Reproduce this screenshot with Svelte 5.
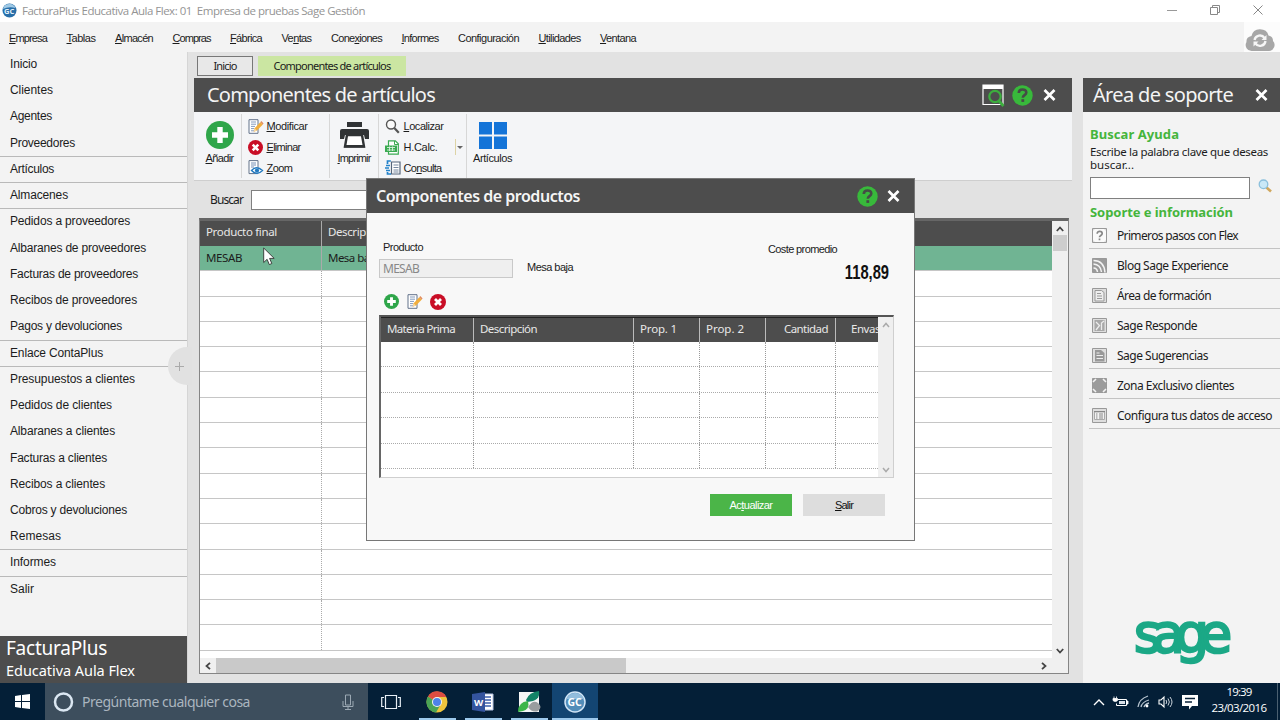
<script>
  const menu = [
    ['', 'E', 'mpresa', 38], ['', 'T', 'ablas', 29], ['', 'A', 'lmacén', 38], ['', 'C', 'ompras', 38],
    ['', 'F', 'ábrica', 32], ['Ve', 'n', 'tas', 30], ['Cone', 'x', 'iones', 51], ['', 'I', 'nformes', 37],
    ['Confi', 'g', 'uración', 61], ['', 'U', 'tilidades', 42], ['', 'V', 'entana', 36]
  ];
  const nav = [
    ['Inicio', 27], ['Clientes', 43], ['Agentes', 42], ['Proveedores', 65, true], ['Artículos', 44, true],
    ['Almacenes', 58, true], ['Pedidos a proveedores', 120], ['Albaranes de proveedores', 136],
    ['Facturas de proveedores', 128], ['Recibos de proveedores', 127], ['Pagos y devoluciones', 112, true],
    ['Enlace ContaPlus', 93, true], ['Presupuestos a clientes', 125], ['Pedidos de clientes', 102],
    ['Albaranes a clientes', 105], ['Facturas a clientes', 97], ['Recibos a clientes', 95],
    ['Cobros y devoluciones', 117], ['Remesas', 51, true], ['Informes', 46, true], ['Salir', 24]
  ];
  const support = [
    ['help', 'Primeros pasos con Flex', 121], ['feed', 'Blog Sage Experience', 111], ['doc', 'Área de formación', 94],
    ['reply', 'Sage Responde', 80], ['doc2', 'Sage Sugerencias', 91], ['zone', 'Zona Exclusivo clientes', 117],
    ['conf', 'Configura tus datos de acceso', 155]
  ];
  const rows = Array.from({ length: 15 });
  const modalRows = Array.from({ length: 5 });

  // Tracks a label so that it fills its given width.
  function fit(node, width) {
    node.style.letterSpacing = '0px';
    const natural = node.getBoundingClientRect().width;
    const count = node.textContent.length;
    node.style.letterSpacing = (width - natural) / count + 'px';
  }
</script>

{#snippet addIcon(s)}
  <svg width={s} height={s} viewBox="0 0 28 28"><circle cx="14" cy="14" r="14" fill="#2fa64a" /><path d="M14 6v16M6 14h16" stroke="#fff" stroke-width="5.4" /></svg>
{/snippet}
{#snippet editIcon(s)}
  <svg width={s} height={s} viewBox="0 0 15 15"><path d="M1 .7h9v13.6H1z" fill="#fff" stroke="#63728a" /><path d="M3 3h5M3 5.2h5M3 7.4h4M3 9.6h3M3 11.8h3" stroke="#7790b5" stroke-width=".9" /><path d="M5.7 12.8l.9-3.5 5.7-6.1 2.5 2.4-5.8 6z" fill="#f1ae3d" /><path d="M5.7 12.8l.9-3.5 2.3 2.3z" fill="#f5d7a0" /><path d="M12.3 3.2l1.1-1.1 2.2 2.3-1 1.1z" fill="#e28d61" /></svg>
{/snippet}
{#snippet deleteIcon(s)}
  <svg width={s} height={s} viewBox="0 0 16 16"><circle cx="8" cy="8" r="8" fill="#c90e26" /><path d="M5 5l6 6M11 5l-6 6" stroke="#fff" stroke-width="2.8" /></svg>
{/snippet}
{#snippet helpIcon()}
  <svg width="21" height="21" viewBox="0 0 21 21"><circle cx="10.5" cy="10.5" r="10.2" fill="#38b93b" /><path d="M6.8 8c0-4.8 7.5-4.5 7.5-.6 0 2.7-3.5 2.7-3.5 5.3" fill="none" stroke="#454c46" stroke-width="2.6" /><path d="M9.4 14.2h2.8v2.7H9.4z" fill="#454c46" /></svg>
{/snippet}
{#snippet closeIcon()}
  <svg width="13" height="12" viewBox="0 0 13 12"><path d="M1.5 1l10 10M11.500 1l-10 10" stroke="#fff" stroke-width="2.7" /></svg>
{/snippet}

<div class="window">
  <header class="titlebar">
    <svg class="app-icon" width="15" height="15" viewBox="0 0 15 15"><circle cx="7.500" cy="7.500" r="7" fill="#286ea8" /><path d="M1 6Q2 .8 8 1q4 .3 5.500 4Q7 3 1 6z" fill="#9fc9e5" /><text x="2" y="10.600" font-size="7.500" font-weight="bold" fill="#e2f1fc">GC</text></svg>
    <span class="title" use:fit={343}>FacturaPlus Educativa Aula Flex: 01&nbsp; Empresa de pruebas Sage Gestión</span>
    <div class="controls">
      <svg width="10" height="12" viewBox="0 0 10 12"><path d="M0 6.500h10" stroke="#999" /></svg>
      <svg width="10" height="10" viewBox="0 0 10 10"><path d="M.5 2.500h7v7h-7zM2.500 2.500v-2h7v7h-2" fill="none" stroke="#888" /></svg>
      <svg width="10" height="10" viewBox="0 0 10 10"><path d="M.5.5l9 9M9.500.5l-9 9" stroke="#888" /></svg>
    </div>
  </header>

  <nav class="menubar">
    {#each menu as [a, k, b, w]}
      <span class="menu-item" style:width="{w}px"><span use:fit={w}>{a}<u>{k}</u>{b}</span></span>
    {/each}
    <div class="cloud">
      <svg width="30" height="24" viewBox="0 0 30 24"><path d="M7 23a6 6 0 0 1-5.500-9Q1 9 6.500 8 8 1 15 1.200q7 0 8.500 6.400 4.500.7 4.500 5.400a6 6 0 0 1-4 10z" fill="#a7a7a7" /><path d="M9.500 12a5.500 5.500 0 0 1 10-2M20.500 13a5.500 5.500 0 0 1-10 2.500" fill="none" stroke="#f6f6f6" stroke-width="2.300" /><path d="M21.500 7v5h-5zM8.500 18.500v-5h5z" fill="#f6f6f6" /></svg>
    </div>
  </nav>

  <div class="body">
    <aside class="sidebar">
      <ul>
        {#each nav as [label, w, line]}
          <li class:line><span use:fit={w}>{label}</span></li>
        {/each}
      </ul>
      <div class="brand">
        <div class="brand-name"><span use:fit={101}>FacturaPlus</span></div>
        <div class="brand-sub"><span use:fit={129}>Educativa Aula Flex</span></div>
      </div>
      <div class="handle"><svg width="9" height="9" viewBox="0 0 9 9"><path d="M4.500 0v9M0 4.500h9" stroke="#aaa" /></svg></div>
    </aside>

    <main class="main">
      <div class="tabs">
        <div class="tab"><span use:fit={23}>Inicio</span></div>
        <div class="tab active"><span use:fit={117}>Componentes de artículos</span></div>
      </div>
      <div class="panel-head">
        <h1><span use:fit={228}>Componentes de artículos</span></h1>
        <svg class="find" width="22" height="22" viewBox="0 0 22 22"><path d="M1 1h20v19.500H1z" fill="none" stroke="#fff" stroke-width="1.200" /><path d="M1 1h20v4H1z" fill="#fff" /><circle cx="13" cy="12.500" r="5.700" fill="none" stroke="#3cae3e" stroke-width="2.200" /><path d="M16.500 16.500l5 5.500" stroke="#3cae3e" stroke-width="2.800" /></svg>
        {@render helpIcon()}
        <span class="x">{@render closeIcon()}</span>
      </div>
      <div class="toolbar">
        <div class="group big g1">{@render addIcon(28)}<span use:fit={28}><u>A</u>ñadir</span></div>
        <div class="group list g2">
          <div class="tool"><i>{@render editIcon(15)}</i><span use:fit={41}><u>M</u>odificar</span></div>
          <div class="tool"><i>{@render deleteIcon(15)}</i><span use:fit={34}><u>E</u>liminar</span></div>
          <div class="tool"><i><svg width="15" height="15" viewBox="0 0 15 15"><path d="M1 .6h9v13H1z" fill="#fff" stroke="#63728a" /><path d="M3 3h5M3 5h5M3 7h3" stroke="#7790b5" /><path d="M3.500 10.500q5-5.500 11 0-5.500 5.500-11 0z" fill="#fff" stroke="#237ac0" stroke-width="1.400" /><circle cx="9" cy="10.500" r="2.100" fill="#237ac0" /></svg></i><span use:fit={26}><u>Z</u>oom</span></div>
        </div>
        <div class="group big g3"><svg width="29" height="28" viewBox="0 0 29 28"><path d="M7 1h15v5H7zM0 10q0-2 2-2h25q2 0 2 2v8h-4l-1-4H5l-1 4H0z" fill="#303335" /><path d="M7 14h15l2 11.500H5z" fill="#fff" stroke="#303335" stroke-width="2.400" /><path d="M4 24h21v2.500H4z" fill="#303335" /></svg><span use:fit={33}><u>I</u>mprimir</span></div>
        <div class="group list g4">
          <div class="tool"><i><svg width="15" height="15" viewBox="0 0 15 15"><circle cx="6" cy="5.500" r="4.500" fill="#fafafa" stroke="#555" stroke-width="1.400" /><path d="M9.300 9l4.500 4.700" stroke="#555" stroke-width="2.200" /></svg></i><span use:fit={40}><u>L</u>ocalizar</span></div>
          <div class="tool"><i><svg width="15" height="15" viewBox="0 0 15 15"><path d="M3.500 5V.8h6.800l3 3v10.400H3.500z" fill="#fff" stroke="#3aaa51" stroke-width="1.200" /><path d="M9.500 1v3.500h4" fill="none" stroke="#3aaa51" /><path d="M0 5.500h12v6.500H0z" fill="#3aaa51" /><path d="M2 7.500h8M2 10h8M4.500 6.500v4.500M7.500 6.500v4.500" stroke="#d7f0db" stroke-width=".9" /></svg></i><span use:fit={34}>H.Calc.</span></div>
          <div class="tool"><i><svg width="16" height="15" viewBox="0 0 16 15"><path d="M6.500 2h8.500v12H6.500z" fill="#fff" stroke="#55657a" stroke-width="1.200" /><path d="M8.500 5h5M8.500 7.500h5M8.500 10h5M8.500 12h5" stroke="#667b94" stroke-width=".9" /><path d="M5.800 1H2.500v3M1 5.500h4M0 8h4M1 10.500h4M2.500 12v2H6" fill="none" stroke="#2382ca" stroke-width="1.700" /></svg></i><span use:fit={38}>Co<u>n</u>sulta</span></div>
          <div class="drop"></div>
        </div>
        <div class="group big g5"><svg width="28" height="27" viewBox="0 0 28 27"><path d="M0 0h13v12.500H0zM15 0h13v12.500H15zM0 14.500h13V27H0zM15 14.500h13V27H15z" fill="#1474d8" /></svg><span use:fit={39}>Artículos</span></div>
      </div>
      <div class="search"><span use:fit={33}>Buscar</span><div class="input"></div></div>
      <div class="grid">
        <div class="grid-top">
          <div class="rows">
            <div class="row head"><div><span use:fit={71}>Producto final</span></div><div><span use:fit={59}>Descripción</span></div></div>
            <div class="row sel"><div><span use:fit={36}>MESAB</span></div><div><span use:fit={50}>Mesa baja</span></div></div>
            {#each rows as _}<div class="row"><div></div><div></div></div>{/each}
          </div>
          <div class="vscroll">
            <svg width="8" height="6" viewBox="0 0 8 6"><path d="M.8 5L4 1.500 7.200 5" fill="none" stroke="#444" stroke-width="1.800" /></svg>
            <div class="vthumb"></div>
            <svg width="8" height="6" viewBox="0 0 8 6"><path d="M.8 1L4 4.500 7.200 1" fill="none" stroke="#444" stroke-width="1.800" /></svg>
          </div>
        </div>
        <div class="hscroll">
          <svg width="6" height="8" viewBox="0 0 6 8"><path d="M5 .8L1.500 4 5 7.200" fill="none" stroke="#444" stroke-width="1.800" /></svg>
          <div class="track"><div class="hthumb"></div></div>
          <svg width="6" height="8" viewBox="0 0 6 8"><path d="M1 .8L4.500 4 1 7.200" fill="none" stroke="#444" stroke-width="1.800" /></svg>
        </div>
      </div>
    </main>

    <aside class="support">
      <div class="panel-head side"><h1><span use:fit={140}>Área de soporte</span></h1>{@render closeIcon()}</div>
      <div class="support-body">
        <h2><span use:fit={89}>Buscar Ayuda</span></h2>
        <p><span use:fit={178}>Escribe la palabra clave que deseas</span><br /><span use:fit={44}>buscar...</span></p>
        <div class="help-search"><div class="input"></div><svg width="14" height="14" viewBox="0 0 14 14"><path d="M8.500 8.500l4.500 4" stroke="#d0a75d" stroke-width="2.600" /><circle cx="5.500" cy="5.300" r="4.300" fill="#c9e8f7" stroke="#8abfdc" stroke-width="1.300" /></svg></div>
        <h2><span use:fit={143}>Soporte e información</span></h2>
        {#each support as [icon, label, w]}
          <div class="link">
            <svg width="15" height="15" viewBox="0 0 15 15">
              <path d="M.5.5h14v14H.5z" fill={icon === 'feed' || icon === 'zone' ? '#9b9b9b' : '#dedede'} stroke="#999" />
              {#if icon === 'help'}<path d="M3 1h9l2 2v9l-2 2H3l-2-2V3z" fill="#fafafa" /><path d="M5.200 5.800c0-3.600 5-3 5-.3 0 2-2.700 2-2.700 3.800M7.500 10.600v1.700" fill="none" stroke="#888" stroke-width="1.700" />
              {:else if icon === 'feed'}<path d="M1.500 2.500q10.500 0 11.500 12M1.500 6q7 .5 8 8M1.500 10q3.500 0 4 4" fill="none" stroke="#f4f4f4" stroke-width="1.500" />
              {:else if icon === 'doc'}<path d="M3 2.500h6.500l2.500 2V13H3z" fill="#eee" stroke="#999" /><path d="M5 5.500h4M5 8h5M5 10.500h5" stroke="#999" />
              {:else if icon === 'reply'}<path d="M2.500 2h10v11h-10z" fill="#a8a8a8" /><path d="M4 4l3.500 3.500L4 12M9.500 12V5l2.500-2" fill="none" stroke="#ececec" stroke-width="1.300" />
              {:else if icon === 'doc2'}<path d="M3 2h6l3.500 3v8.500H3z" fill="#999" /><path d="M4.500 5h3M4.500 7.500H11M4.500 10.500H11" stroke="#eee" />
              {:else if icon === 'zone'}<path d="M1 4l3-3M11 1l3 3M1 11l3 3M14 11l-3 3" stroke="#f2f2f2" stroke-width="1.600" />
              {:else}<path d="M2.500 4v7.500h10V4z" fill="#f2f2f2" stroke="#aaa" /><path d="M2 3.500h11M4 6h1.500M7 6h4M4 8h1.500M7 8h4M4 10h1.500M7 10h4" stroke="#888" />{/if}
            </svg>
            <span use:fit={w}>{label}</span>
          </div>
        {/each}
        <svg class="sage" width="100" height="50" viewBox="0 0 100 50"><text x="0" y="37" textLength="98" lengthAdjust="spacing">sage</text></svg>
      </div>
    </aside>
  </div>

  <footer class="taskbar">
    <div class="start"><svg width="15" height="15" viewBox="0 0 15 15"><path d="M0 2l6-1v6H0zM7 .9L15 0v7H7zM0 8h6v6l-6-1zM7 8h8v7l-8-1z" fill="#fff" /></svg></div>
    <div class="cortana">
      <svg width="20" height="20" viewBox="0 0 20 20"><circle cx="10.500" cy="10" r="8.500" fill="none" stroke="#dbe7f2" stroke-width="2.500" /></svg>
      <span use:fit={168}>Pregúntame cualquier cosa</span>
      <svg class="mic" width="12" height="16" viewBox="0 0 12 16"><path d="M3.500 1h5v10h-5zM1 7v5.500h10V7M6 12.500V16M3 15.500h6" fill="none" stroke="#9ba8b3" /></svg>
    </div>
    <div class="task"><svg width="20" height="14" viewBox="0 0 20 14"><path d="M4.500.5h11v13h-11zM3 2.500H.7v9H3M17 2.500h2.300v9H17" fill="none" stroke="#e7eef5" stroke-width="1.200" /></svg></div>
    <div class="task open"><svg width="22" height="22" viewBox="0 0 22 22"><circle cx="11" cy="11" r="10.500" fill="#efc43d" /><path d="M11 11L2 5.500A10.500 10.500 0 0 0 10 21.500l4-7z" fill="#4aa455" /><path d="M2 5.500A10.500 10.500 0 0 1 20.400 6H11v5z" fill="#dc4c42" /><circle cx="11" cy="11" r="5" fill="#f3f3f3" /><circle cx="11" cy="11" r="4" fill="#4e82e8" /></svg></div>
    <div class="task open"><svg width="22" height="20" viewBox="0 0 22 20"><path d="M11 2h10v16H11z" fill="#fff" stroke="#b5c4e6" /><path d="M13 5h6M13 8h6M13 11h6M13 14h6" stroke="#3d5fac" stroke-width="1.300" /><path d="M0 2l13-2v20L0 18z" fill="#34549e" /><text x="2" y="13.500" font-size="9.500" font-weight="bold" fill="#fff">W</text></svg></div>
    <div class="task open"><svg width="23" height="22" viewBox="0 0 23 22"><path d="M1 1h20v20H1z" fill="#f6f6f6" /><path d="M8 9Q11 1 21 0q2 10-12 11z" fill="#138367" /><path d="M0 21Q0 11 10 10q2 8-5 10z" fill="#3db54a" /><path d="M10 16q5-8 10-4 5 4 0 8-6 2-10-4z" fill="#9a9d9f" /></svg></div>
    <div class="task open current"><svg width="22" height="22" viewBox="0 0 22 22"><circle cx="11" cy="11" r="10" fill="#528db9" stroke="#d2e6f7" stroke-width="1.500" /><path d="M2 8Q6 1 12 2q6 1 8 6z" fill="#92bddd" /><text x="3.500" y="15" font-size="10.500" font-weight="bold" fill="#fff">GC</text></svg></div>
    <div class="tray">
      <svg width="12" height="8" viewBox="0 0 12 8"><path d="M1 7l5-5 5 5" fill="none" stroke="#fff" stroke-width="1.400" /></svg>
      <svg width="15" height="12" viewBox="0 0 15 12"><path d="M5 3.500h8.500v6h-10v-2" fill="none" stroke="#fff" /><path d="M6 5h6v3H6z" fill="#d9e0e8" /><path d="M14 5h1v3h-1zM1 .5v2M3.500 .5v2M0 2.500h4.500v2q-1 1-2.200 1T0 4.500z" fill="#fff" stroke="#fff" stroke-width=".8" /></svg>
      <svg width="14" height="13" viewBox="0 0 14 13"><path d="M2 12Q3 4 12 1M5 12q1-5 8-7M8 12q1-3 5-4" fill="none" stroke="#b8c5d0" stroke-width="1.300" /><circle cx="11" cy="11" r="1.400" fill="#fff" /></svg>
      <svg width="16" height="12" viewBox="0 0 16 12"><path d="M1 4h2l3-3v10L3 8H1z" fill="none" stroke="#fff" stroke-width="1.100" /><path d="M8 4q1.500 2 0 4M10 2.500q2.700 3.500 0 7M12 1q4 5 0 10" fill="none" stroke="#ccd5dd" /></svg>
      <svg width="16" height="16" viewBox="0 0 16 16"><path d="M0 1h16v11h-6l-3 3.500V12H0z" fill="#fff" /><path d="M3 4.500h10M3 8h7" stroke="#082138" stroke-width="1.400" /></svg>
    </div>
    <div class="clock"><span use:fit={25}>19:39</span><span use:fit={55}>23/03/2016</span></div>
  </footer>

  <section class="modal">
    <div class="modal-head"><h3><span use:fit={204}>Componentes de productos</span></h3>{@render helpIcon()}<span class="mx">{@render closeIcon()}</span></div>
    <div class="modal-body">
      <div class="fields">
        <div class="product"><span use:fit={40}>Producto</span><div class="disabled"><span use:fit={36}>MESAB</span></div></div>
        <div class="desc"><span use:fit={46}>Mesa baja</span></div>
        <div class="cost"><span class="cost-label"><span use:fit={69}>Coste promedio</span></span><strong>118,89</strong></div>
      </div>
      <div class="mini">{@render addIcon(15)}{@render editIcon(15)}{@render deleteIcon(16)}</div>
      <div class="mtable">
        <div class="mrows">
          <div class="mrow mhead">
            <div><span use:fit={68}>Materia Prima</span></div><div><span use:fit={57}>Descripción</span></div><div><span use:fit={37}>Prop. 1</span></div><div><span use:fit={38}>Prop. 2</span></div><div class="num"><span use:fit={44}>Cantidad</span></div><div class="num last"><span use:fit={40}>Envases</span></div>
          </div>
          {#each modalRows as _}<div class="mrow"><div></div><div></div><div></div><div></div><div></div><div></div></div>{/each}
        </div>
        <div class="mscroll">
          <svg width="8" height="6" viewBox="0 0 8 6"><path d="M1 5l3-3.500L7 5" fill="none" stroke="#aaa" stroke-width="1.500" /></svg>
          <svg width="8" height="6" viewBox="0 0 8 6"><path d="M1 1l3 3.500L7 1" fill="none" stroke="#aaa" stroke-width="1.500" /></svg>
        </div>
      </div>
      <div class="buttons"><button class="ok"><span use:fit={43}>Ac<u>t</u>ualizar</span></button><button><span use:fit={18}><u>S</u>alir</span></button></div>
    </div>
  </section>

  <svg class="cursor" width="12" height="19" viewBox="0 0 12 19"><path d="M.7 1v14.500l3.400-3.200 2.200 5.300 2.500-1.100-2.200-5.100h4.600z" fill="#fff" stroke="#333" stroke-width=".9" /></svg>
</div>

<style>
  :global(body) { margin: 0; overflow: hidden; }
  * { box-sizing: border-box; }
  svg { display: block; flex: none; overflow: visible; }
  span { display: inline-block; white-space: nowrap; }
  h1, h2, h3, p, ul { margin: 0; padding: 0; }
  u { text-underline-offset: 1px; text-decoration-thickness: 1px; }
  .window { position: relative; width: 1280px; height: 720px; display: flex; flex-direction: column; overflow: hidden; background: #e2e2e2; color: #1c1c1c; font: 11.500px/14px "Noto Sans", "DejaVu Sans Condensed", sans-serif; }
  .titlebar { height: 22px; flex: none; background: #fff; display: flex; align-items: center; padding-left: 2px; gap: 5px; }
  .app-icon { margin-top: -2px; }
  .title { color: #949494; font: 11.500px/22px "Open Sans", sans-serif; }
  .controls { display: flex; align-items: center; gap: 33px; margin: -3px 17px 0 auto; }
  .menubar { height: 30px; flex: none; background: #f3f3f3; display: flex; align-items: center; padding-left: 9px; gap: 19.500px; font: 11px/16px "Liberation Sans", sans-serif; }
  .menu-item { flex: none; margin-top: 1px; }
  .cloud { margin-left: auto; width: 36px; height: 30px; background: #fcfcfc; padding: 6px 0 0 1px; }
  .body { flex: none; height: 631px; display: flex; }
  .sidebar { position: relative; width: 187px; background: #f3f3f3; display: flex; flex-direction: column; justify-content: space-between; font: 12px/25px "Liberation Sans", sans-serif; }
  .sidebar ul { list-style: none; }
  li { height: 26.240px; padding-left: 10px; border-bottom: 1px solid transparent; }
  li.line { border-color: #b9b9b9; }
  .brand { height: 47px; background: #4d4d4d; color: #fff; padding: 1px 6px; font-family: "Noto Sans", sans-serif; }
  .brand-name { font-size: 19px; line-height: 23px; }
  .brand-sub { font-size: 14.500px; line-height: 21px; }
  .handle { position: absolute; left: 168px; top: 295px; width: 24px; height: 38px; border-radius: 19px 0 0 19px; background: #e1e1e1; display: flex; align-items: center; padding-left: 7px; z-index: 1; }
  .main { width: 896px; background: #e2e2e2; padding: 4px 11px 0 7px; border-left: 1px solid #d5d5d5; display: flex; flex-direction: column; }
  .tabs { display: flex; gap: 5px; height: 22px; padding-left: 2px; flex: none; }
  .tab { height: 20px; width: 56px; border: 1px solid #777; text-align: center; font-size: 11px; line-height: 18px; background: #e8e8e8; }
  .tab.active { width: 148px; background: #cbe6a2; border-color: #cbe6a2; }
  .panel-head { height: 34px; flex: none; background: #4d4d4d; color: #f4f4f4; display: flex; align-items: center; padding: 0 16px 0 13px; margin-left: -1px; margin-right: 0; }
  h1 { font-size: 20px; font-weight: normal; line-height: 32px; margin-right: auto; }
  .find { margin-right: 8px; }
  .x { margin-left: 10px; }
  .toolbar { height: 69px; flex: none; background: #f4f5f7; margin-left: -1px; border-bottom: 1px solid #cecece; display: flex; font: 11px/14px "Liberation Sans", sans-serif; }
  .group { border-right: 1px solid #d7d7d7; height: 64px; margin-top: 2px; flex: none; }
  .big { display: flex; flex-direction: column; align-items: center; padding-top: 7px; justify-content: flex-start; }
  .big svg { margin-bottom: 2px; }
  .g1 { width: 48px; padding-left: 4px; }
  .g2 { width: 88px; }
  .g3 { width: 49px; }
  .g4 { width: 88px; position: relative; }
  .g5 { width: 51px; border: 0; padding-top: 8px; }
  .list { padding: 2px 0 0 6px; }
  .tool { display: flex; align-items: center; height: 20.800px; }
  .tool i { width: 18.500px; }
  .drop { position: absolute; left: 76px; top: 25px; width: 8px; height: 16px; border-left: 1px solid #ddd3a5; }
  .drop::after { content: ""; position: absolute; left: 1px; top: 7px; border: 3px solid transparent; border-top-color: #666; }
  .search { height: 38px; flex: none; display: flex; align-items: center; padding-left: 15px; font-size: 12px; }
  .input { border: 1px solid #808080; background: #fff; }
  .search .input { width: 300px; height: 20px; margin-left: 8px; }
  .grid { width: 870px; height: 456px; flex: none; margin: -1px 0 0 4px; border: 1px solid #858585; border-top: 3px solid #666; background: #fff; display: flex; flex-direction: column; }
  .grid-top { display: flex; height: 437px; overflow: hidden; }
  .rows { width: 852px; }
  .row { display: grid; grid-template-columns: 122px 1fr; height: 25.300px; line-height: 23px; border-bottom: 1px solid #c6c6c6; }
  .row > div { padding-left: 6px; border-right: 1px dotted #aaa; }
  .row > div:last-child { border-right: 0; }
  .head { height: 25px; background: #4d4d4d; color: #e7e7e7; line-height: 22px; border: 0; }
  .head > div:first-child, .sel > div:first-child { border-right: 1px solid #aaa; }
  .sel { background: #70b493; }
  .vscroll { width: 16px; background: #f0f0f0; display: flex; flex-direction: column; align-items: center; padding: 5px 0 4px; justify-content: space-between; }
  .vthumb { width: 14px; height: 16px; background: #cdcdcd; margin: 3px 0 auto; }
  .hscroll { flex: 1; display: flex; align-items: center; background: #f0f0f0; padding: 0 21px 0 5px; gap: 5px; }
  .track { flex: 1; }
  .hthumb { width: 410px; height: 15px; background: #c9c9c9; }
  .support { width: 197px; background: #f3f3f3; }
  .support .panel-head { margin: 26px 0 0; padding: 0 12px 0 10px; box-shadow: 0 -26px #e2e2e2; }
  .support::before { content: ""; display: table; }
  .support-body { padding: 14px 0 0 7px; }
  h2 { color: #45b53c; font-size: 13px; line-height: 17px; }
  p { font-size: 11.500px; line-height: 13px; margin-top: 2px; }
  p span { vertical-align: top; }
  .help-search { display: flex; margin: 6px 0 5px; gap: 8px; align-items: flex-start; }
  .help-search svg { margin-top: 2px; }
  .help-search .input { width: 160px; height: 22px; }
  .link { display: flex; align-items: center; gap: 10px; height: 30px; border-bottom: 1px solid #c3c3c3; margin-left: -1px; padding: 4px 0 0 3px; font-size: 12px; }
  h2 + .link { height: 28px; padding-top: 2px; }
  .sage { margin: 186px 0 0 44px; }
  .sage text { font: 53px "DejaVu Sans", sans-serif; fill: #1ba886; stroke: #1ba886; stroke-width: 2.400px; }
  .taskbar { flex: 1; background: #041f37; display: flex; }
  .start { width: 45px; display: grid; place-items: center; }
  .cortana { width: 323px; background: #3d4e5d; display: flex; align-items: center; padding: 0 14px 0 8px; gap: 9px; color: #aab5bf; font-size: 14px; }
  .mic { margin-left: auto; }
  .task { width: 46px; display: grid; place-items: center; position: relative; }
  .task.open::after { content: ""; position: absolute; bottom: 0; left: 5px; width: 37px; height: 2px; background: #9dc9ec; }
  .task.current { background: #134572; }
  .task.current::after { left: 0; width: 100%; }
  .tray { display: flex; align-items: center; gap: 8px; margin-left: auto; }
  .clock { width: 77px; margin-right: 2px; border-right: 1px solid #4b6071; color: #fff; display: flex; flex-direction: column; align-items: center; font: 11.500px/16px "Open Sans", sans-serif; padding-top: 1px; margin-left: 3px; }
  .modal { position: absolute; left: 366px; top: 178px; width: 549px; height: 363px; border: 1px solid #777; background: #f8f8f8; display: flex; flex-direction: column; }
  .modal-head { height: 34px; flex: none; background: #4d4d4d; color: #f5f5f5; display: flex; align-items: center; padding: 0 14px 0 9px; }
  h3 { font-size: 16px; line-height: 34px; margin-right: auto; font-weight: 600; }
  .mx { margin-left: 9px; }
  .modal-body { padding: 27px 20px 0 12px; }
  .fields { display: flex; height: 54px; font: 11px/14px "Liberation Sans", sans-serif; }
  .product { width: 134px; line-height: 15px; }
  .product > span { margin-left: 4px; }
  .disabled { height: 19px; border: 1px solid #c9c9c9; background: #efefef; color: #888; padding-left: 3px; margin-top: 4px; line-height: 17px; font-family: "Noto Sans", sans-serif; font-size: 12px; }
  .desc { margin: 20px 0 0 14px; }
  .cost { margin: 2px 5px 0 auto; display: flex; flex-direction: column; align-items: flex-end; }
  .cost-label { margin-right: 52px; }
  strong { font: bold 21px/24px "Liberation Sans", sans-serif; width: 45px; color: #111; transform: scaleX(.7); transform-origin: right; white-space: nowrap; direction: rtl; margin-top: 4px; }
  .mini { display: flex; gap: 8px; padding-left: 5px; height: 22px; align-items: flex-start; }
  .mtable { height: 163px; border: 1px solid #cfcfcf; border-top: 2px solid #555; border-left: 2px solid #666; background: #fff; display: flex; margin: -1px 0 0 0; width: 515px; }
  .mrows { width: 498px; overflow: hidden; }
  .mrow { display: grid; grid-template-columns: 93px 160px 66px 66px 70px 43px; height: 25.400px; border-bottom: 1px dotted #aaa; }
  .mrow > div { border-right: 1px dotted #999; padding-left: 6px; overflow: hidden; }
  .mrow > div:last-child { border-right: 0; }
  .mhead { height: 25px; background: #4d4d4d; color: #e8e8e8; border-bottom: 0; line-height: 22px; border-top: 1px solid #222; }
  .mhead > div { border-right: 1px solid #bbb; }
  .mhead .num { text-align: right; padding-right: 7px; }
  .mhead .last { text-align: left; padding-left: 15px; padding-right: 0; }
  .mscroll { width: 15px; background: #efefef; display: flex; flex-direction: column; justify-content: space-between; align-items: center; padding: 5px 0 4px; }
  .buttons { display: flex; justify-content: flex-end; gap: 11px; margin: 16px 9px 0 0; }
  button { width: 82px; height: 22px; padding: 0; border: 0; background: #ddd; font: 11px/22px "Liberation Sans", sans-serif; color: #111; }
  .ok { background: #4bb548; color: #fff; }
  .cursor { position: absolute; left: 263px; top: 247px; }
</style>
